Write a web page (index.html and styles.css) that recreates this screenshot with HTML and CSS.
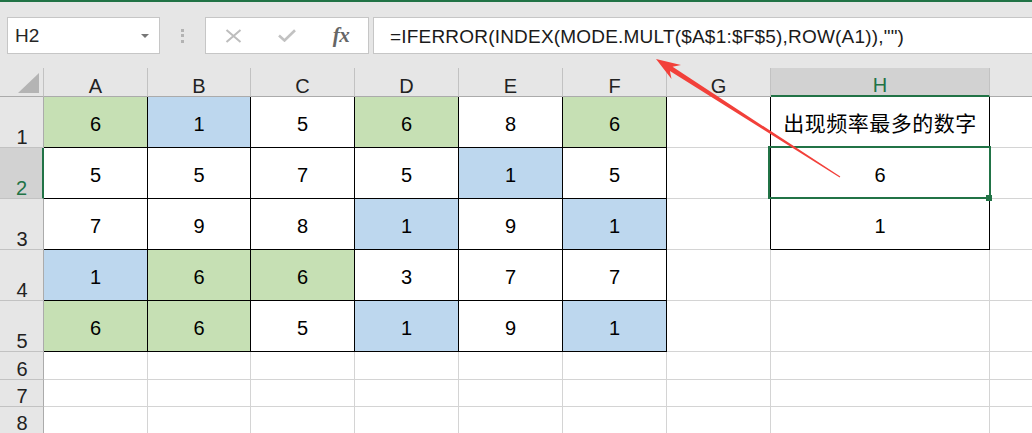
FILE: index.html
```html
<!DOCTYPE html>
<html lang="zh">
<head>
<meta charset="utf-8">
<title>Excel</title>
<link rel="stylesheet" href="styles.css">
</head>
<body>
<div class="app">
  <div class="topline"></div>
  <div class="toolbar">
    <div class="namebox">
      <span class="nb-text">H2</span>
      <svg class="nb-arrow" width="8" height="4" viewBox="0 0 8 4"><path d="M0 0 H8 L4 4 Z" fill="#777"/></svg>
    </div>
    <div class="dots"><i></i><i></i><i></i></div>
    <div class="fbuttons">
      <span class="slot"><svg width="17" height="14" viewBox="0 0 17 14"><path d="M1.5 1 L15.5 13 M15.5 1 L1.5 13" stroke="#bdbdbd" stroke-width="2" fill="none"/></svg></span>
      <span class="slot"><svg width="18" height="13" viewBox="0 0 18 13"><path d="M1 6.5 L6.5 11.5 L17 1.2" stroke="#c2c2c2" stroke-width="2.6" fill="none"/></svg></span>
      <span class="slot fx">fx</span>
    </div>
    <div class="finput">=IFERROR(INDEX(MODE.MULT($A$1:$F$5),ROW(A1)),"")</div>
  </div>

  <div class="sheet">
    <!-- header row -->
    <div class="corner"><svg width="21" height="20" viewBox="0 0 21 20"><path d="M21 0 V20 H0 Z" fill="#b4b4b4"/></svg></div>
    <div class="ch">A</div><div class="ch">B</div><div class="ch">C</div><div class="ch">D</div><div class="ch">E</div><div class="ch">F</div><div class="ch">G</div><div class="ch hsel">H</div><div class="ch last"></div>

    <!-- row 1 -->
    <div class="rh">1</div>
    <div class="c d g">6</div><div class="c d b">1</div><div class="c d">5</div><div class="c d g">6</div><div class="c d">8</div><div class="c d g">6</div>
    <div class="c gr"></div><div class="c d cjk">出现频率最多的数字</div><div class="c last"></div>

    <!-- row 2 -->
    <div class="rh rsel">2</div>
    <div class="c d">5</div><div class="c d">5</div><div class="c d">7</div><div class="c d">5</div><div class="c d b">1</div><div class="c d">5</div>
    <div class="c gr"></div><div class="c d active">6</div><div class="c last"></div>

    <!-- row 3 -->
    <div class="rh">3</div>
    <div class="c d">7</div><div class="c d">9</div><div class="c d">8</div><div class="c d b">1</div><div class="c d">9</div><div class="c d b">1</div>
    <div class="c gr"></div><div class="c d">1</div><div class="c last"></div>

    <!-- row 4 -->
    <div class="rh">4</div>
    <div class="c d b">1</div><div class="c d g">6</div><div class="c d g">6</div><div class="c d">3</div><div class="c d">7</div><div class="c d">7</div>
    <div class="c"></div><div class="c"></div><div class="c last"></div>

    <!-- row 5 -->
    <div class="rh">5</div>
    <div class="c d g">6</div><div class="c d g">6</div><div class="c d">5</div><div class="c d b">1</div><div class="c d">9</div><div class="c d b">1</div>
    <div class="c"></div><div class="c"></div><div class="c last"></div>

    <!-- rows 6-8 -->
    <div class="rh">6</div>
    <div class="c"></div><div class="c"></div><div class="c"></div><div class="c"></div><div class="c"></div><div class="c"></div><div class="c"></div><div class="c"></div><div class="c last"></div>
    <div class="rh">7</div>
    <div class="c"></div><div class="c"></div><div class="c"></div><div class="c"></div><div class="c"></div><div class="c"></div><div class="c"></div><div class="c"></div><div class="c last"></div>
    <div class="rh">8</div>
    <div class="c"></div><div class="c"></div><div class="c"></div><div class="c"></div><div class="c"></div><div class="c"></div><div class="c"></div><div class="c"></div><div class="c last"></div>
  </div>

  <svg class="arrow" width="1032" height="433" viewBox="0 0 1032 433">
    <polygon points="656,59 681,65 672.6,66.8 840.3,176.6 839.7,177.4 669.9,71 671.5,79" fill="#f2403a"/>
  </svg>
</div>
</body>
</html>
```

FILE: styles.css
```css
* { box-sizing: border-box; }
html, body { margin: 0; padding: 0; }
body {
  width: 1032px;
  height: 433px;
  overflow: hidden;
  background: #ffffff;
  font-family: "Liberation Sans", "Noto Sans CJK SC", sans-serif;
  color: #000;
}
.app { position: relative; width: 1032px; height: 433px; overflow: hidden; }

.topline { height: 2px; background: #217346; }

.toolbar {
  display: flex;
  align-items: center;
  height: 66px;
  padding: 15px 0 14px 7px;
  background: #e6e6e6;
}
.namebox {
  width: 153px;
  height: 37px;
  background: #fff;
  border: 1px solid #c6c6c6;
  display: flex;
  align-items: center;
  justify-content: space-between;
  padding: 0 10px 0 7px;
}
.nb-text { font-size: 19px; color: #262626; }
.nb-arrow { margin-top: 1px; }

.dots {
  width: 45px;
  height: 37px;
  display: flex;
  flex-direction: column;
  align-items: center;
  justify-content: center;
  gap: 2.5px;
}
.dots i { display: block; width: 3px; height: 3px; background: #b3b3b3; }

.fbuttons {
  width: 164px;
  height: 37px;
  background: #fff;
  border: 1px solid #c6c6c6;
  display: flex;
  align-items: center;
}
.slot {
  width: 54px;
  display: flex;
  align-items: center;
  justify-content: center;
}
.fx {
  font-family: "Liberation Serif", "DejaVu Serif", serif;
  font-style: italic;
  font-weight: bold;
  font-size: 21px;
  color: #666;
  letter-spacing: -0.5px;
}

.finput {
  flex: 1;
  height: 37px;
  margin-left: 4px;
  background: #fff;
  border: 1px solid #c6c6c6;
  border-right: none;
  padding: 3px 0 0 16px;
  display: flex;
  align-items: center;
  font-size: 19px;
  letter-spacing: 0.2px;
  color: #1a1a1a;
  white-space: nowrap;
}

.sheet {
  display: grid;
  grid-template-columns: 44px 104px 103px 104px 104px 104px 104px 104px 219px 1fr;
  grid-template-rows: 29px 51px 51px 51px 51px 51px 28px 27px 27px;
  font-size: 20px;
}

.corner {
  background: #e6e6e6;
  border-right: 1px solid #c2c2c2;
  border-bottom: 1px solid #ababab;
  display: flex;
  align-items: flex-end;
  justify-content: flex-end;
  padding: 0 4px 3px 0;
}
.ch {
  background: #e6e6e6;
  border-right: 1px solid #c2c2c2;
  border-bottom: 1px solid #ababab;
  display: flex;
  align-items: flex-end;
  justify-content: center;
  line-height: 1;
  color: #222;
}
.ch.hsel {
  background: #d2d2d2;
  color: #217346;
  border-bottom: 2px solid #217346;
}
.ch.last { border-right: none; }

.rh {
  background: #e6e6e6;
  border-right: 1px solid #ababab;
  border-bottom: 1px solid #c2c2c2;
  display: flex;
  align-items: flex-end;
  justify-content: center;
  line-height: 1;
  color: #222;
  padding-left: 1px;
}
.rh.rsel {
  background: #d2d2d2;
  color: #217346;
  border-right: 2px solid #217346;
}

.c {
  border-right: 1px solid #d4d4d4;
  border-bottom: 1px solid #d4d4d4;
  display: flex;
  align-items: center;
  justify-content: center;
  padding-top: 3px;
  line-height: 1;
  background: #fff;
}
.c.last { border-right: none; }
.c.d { border-right-color: #000; border-bottom-color: #000; }
.c.gr { border-right-color: #000; }
.c.g { background: #c6e0b4; }
.c.b { background: #bdd7ee; }
.c.cjk { font-size: 21px; letter-spacing: 0.5px; }

.c.active { position: relative; }
.c.active::after {
  content: "";
  position: absolute;
  left: -3px;
  top: -2px;
  right: -2px;
  bottom: -1px;
  border: 2px solid #217346;
  z-index: 2;
}
.c.active::before {
  content: "";
  position: absolute;
  right: -3px;
  bottom: -3px;
  width: 6px;
  height: 6px;
  background: #217346;
  z-index: 3;
}

.arrow {
  position: absolute;
  left: 0;
  top: 0;
  pointer-events: none;
  z-index: 10;
}
```
